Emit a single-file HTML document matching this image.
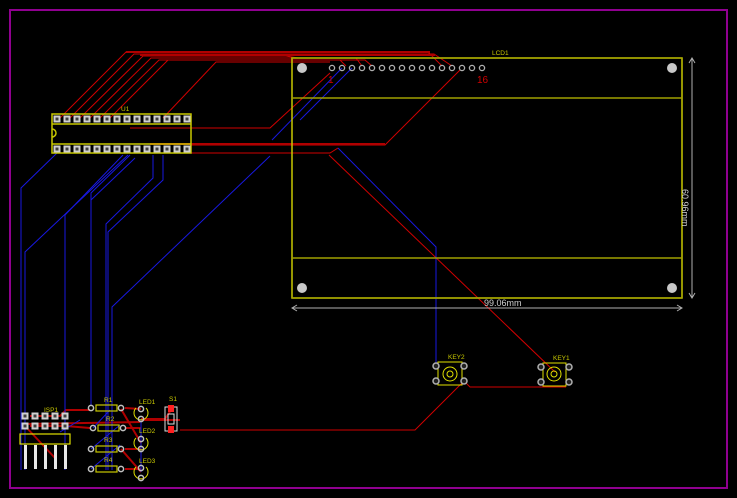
<!DOCTYPE html>
<html><head><meta charset="utf-8"><style>
html,body{margin:0;padding:0;background:#000;}
svg{display:block;}
text{font-family:"Liberation Sans",sans-serif;}
</style></head><body>
<svg width="737" height="498" viewBox="0 0 737 498" xmlns="http://www.w3.org/2000/svg">
<defs>
<g id="sq"><rect x="-3.5" y="-3.5" width="7" height="7" fill="#d0d0d0"/><rect x="-1.5" y="-1.5" width="3" height="3" fill="#404040"/></g>
</defs>
<rect width="737" height="498" fill="#000"/>
<rect x="10" y="10" width="717" height="478" fill="none" stroke="#900090" stroke-width="2"/>

<g fill="none" stroke="#d00000" stroke-width="1">
<polyline points="60,118 126,52 428,52 442,66"/>
<polyline points="70,118 134,54 434,54 452,66"/>
<polyline points="80,118 143,56 286,56 298,58"/>
<polyline points="90,118 151,58 356,58 362,66"/>
<polyline points="100,118 159,60 365,60 372,66"/>
<polyline points="110,118 168,60 340,60 346,66"/>
<polyline points="163,118 216,62 330,62"/>
<polyline points="130,128 270,128 330,73"/>
<polyline points="190,145 385,145 460,70"/>
<polyline points="105,153 330,153 338,148"/>
<polyline points="329,155 555,372"/>
<polyline points="464,381 415,430 180,430"/>
<polyline points="464,381 470,387 566,387"/>
</g>
<g fill="none" stroke="#b00000" stroke-width="2">
<line x1="126" y1="52" x2="430" y2="52"/>
<line x1="140" y1="55" x2="435" y2="55"/>
<line x1="150" y1="144" x2="385" y2="144"/>
<polyline points="30,416 60,416 66,410 90,410"/>
<polyline points="30,426 66,426 90,428"/>
<polyline points="125,408 141,409"/>
<polyline points="125,428 141,428"/>
<polyline points="125,449 141,449"/>
<polyline points="125,469 141,469"/>
<polyline points="141,419 165,419 171,410"/>
<polyline points="141,420 180,420"/>
<polyline points="25,426 55,458"/>
<polyline points="121,409 141,443"/>
<polyline points="121,449 141,472"/>
<polyline points="25,424 140,422"/>
</g>

<g fill="none" stroke="#1818e0" stroke-width="1">
<polyline points="57,153 21,188 21,470"/>
<polyline points="128,155 25,252 25,470"/>
<polyline points="123,155 65,215 65,470"/>
<polyline points="130,155 91,193 91,405"/>
<polyline points="135,158 91,200"/>
<polyline points="153,155 153,178 106,224 106,470"/>
<polyline points="163,155 163,180 108,232 108,470"/>
<polyline points="270,156 112,307 112,470"/>
<polyline points="338,148 436,247 436,365"/>
<polyline points="352,68 300,120"/>
<polyline points="342,68 272,140"/>
<polyline points="141,419 141,472"/>
<polyline points="93,428 110,410"/>
<polyline points="91,449 120,425"/>
<polyline points="91,469 120,445"/>
<polyline points="60,432 80,420"/>
</g>

<g fill="none">
<rect x="292" y="58" width="390" height="240" stroke="#c8c800" stroke-width="1.5"/>
<line x1="292" y1="98" x2="682" y2="98" stroke="#a0a000" stroke-width="1.5"/>
<line x1="292" y1="258" x2="682" y2="258" stroke="#a0a000" stroke-width="1.5"/>
<line x1="292" y1="58" x2="682" y2="58" stroke="#a0a000" stroke-width="1.5"/>
<line x1="292" y1="298" x2="682" y2="298" stroke="#a0a000" stroke-width="1.5"/>
</g>
<g fill="#c8c8c8">
<circle cx="302" cy="68" r="5"/><circle cx="672" cy="68" r="5"/>
<circle cx="302" cy="288" r="5"/><circle cx="672" cy="288" r="5"/>
</g>
<g fill="none" stroke="#b0b0b0" stroke-width="1.3">
<circle cx="332" cy="68" r="2.6"/><circle cx="342" cy="68" r="2.6"/><circle cx="352" cy="68" r="2.6"/><circle cx="362" cy="68" r="2.6"/>
<circle cx="372" cy="68" r="2.6"/><circle cx="382" cy="68" r="2.6"/><circle cx="392" cy="68" r="2.6"/><circle cx="402" cy="68" r="2.6"/>
<circle cx="412" cy="68" r="2.6"/><circle cx="422" cy="68" r="2.6"/><circle cx="432" cy="68" r="2.6"/><circle cx="442" cy="68" r="2.6"/>
<circle cx="452" cy="68" r="2.6"/><circle cx="462" cy="68" r="2.6"/><circle cx="472" cy="68" r="2.6"/><circle cx="482" cy="68" r="2.6"/>
</g>
<text x="328" y="83" fill="#d00000" font-size="10">1</text>
<text x="477" y="83" fill="#d00000" font-size="10">16</text>
<text x="492" y="55" fill="#c8c800" font-size="6.5">LCD1</text>

<g stroke="#b0b0b0" stroke-width="1" fill="none">
<line x1="692" y1="58" x2="692" y2="298"/>
<polyline points="689,63 692,58 695,63"/>
<polyline points="689,293 692,298 695,293"/>
<line x1="292" y1="308" x2="682" y2="308"/>
<polyline points="297,305 292,308 297,311"/>
<polyline points="677,305 682,308 677,311"/>
</g>
<text x="484" y="306" fill="#d0d0d0" font-size="9">99.06mm</text>
<text transform="translate(682,189) rotate(90)" fill="#d0d0d0" font-size="9">60.96mm</text>

<g fill="none" stroke="#c8c800" stroke-width="1.5">
<rect x="52" y="114" width="139" height="39"/>
<line x1="52" y1="124" x2="191" y2="124"/>
<line x1="52" y1="144" x2="191" y2="144"/>
<path d="M52,129 a4,4 0 0 1 0,8" />
</g>
<text x="121" y="111" fill="#c8c800" font-size="6.5">U1</text>
<g>
<use href="#sq" x="57" y="119"/><use href="#sq" x="67" y="119"/><use href="#sq" x="77" y="119"/><use href="#sq" x="87" y="119"/><use href="#sq" x="97" y="119"/><use href="#sq" x="107" y="119"/><use href="#sq" x="117" y="119"/><use href="#sq" x="127" y="119"/><use href="#sq" x="137" y="119"/><use href="#sq" x="147" y="119"/><use href="#sq" x="157" y="119"/><use href="#sq" x="167" y="119"/><use href="#sq" x="177" y="119"/><use href="#sq" x="187" y="119"/>
<use href="#sq" x="57" y="149"/><use href="#sq" x="67" y="149"/><use href="#sq" x="77" y="149"/><use href="#sq" x="87" y="149"/><use href="#sq" x="97" y="149"/><use href="#sq" x="107" y="149"/><use href="#sq" x="117" y="149"/><use href="#sq" x="127" y="149"/><use href="#sq" x="137" y="149"/><use href="#sq" x="147" y="149"/><use href="#sq" x="157" y="149"/><use href="#sq" x="167" y="149"/><use href="#sq" x="177" y="149"/><use href="#sq" x="187" y="149"/>
</g>

<text x="44" y="412" fill="#c8c800" font-size="6.5">ISP1</text>
<g>
<use href="#sq" x="25" y="416"/><use href="#sq" x="35" y="416"/><use href="#sq" x="45" y="416"/><use href="#sq" x="55" y="416"/><use href="#sq" x="65" y="416"/>
<use href="#sq" x="25" y="426"/><use href="#sq" x="35" y="426"/><use href="#sq" x="45" y="426"/><use href="#sq" x="55" y="426"/><use href="#sq" x="65" y="426"/>
</g>
<rect x="20" y="434" width="50" height="10" fill="none" stroke="#e0e000" stroke-width="1.2"/>
<g fill="#e8e8e8">
<rect x="24" y="445" width="3" height="24"/><rect x="34" y="445" width="3" height="24"/><rect x="44" y="445" width="3" height="24"/><rect x="54" y="445" width="3" height="24"/><rect x="64" y="445" width="3" height="24"/>
</g>

<g fill="none" stroke="#c8c800" stroke-width="1.2">
<rect x="96" y="405" width="21" height="6"/>
<rect x="98" y="425" width="21" height="6"/>
<rect x="96" y="446" width="21" height="6"/>
<rect x="96" y="466" width="21" height="6"/>
</g>
<g fill="none" stroke="#c0c0c0" stroke-width="1.5">
<circle cx="91" cy="408" r="2.6"/><circle cx="121" cy="408" r="2.6"/>
<circle cx="93" cy="428" r="2.6"/><circle cx="123" cy="428" r="2.6"/>
<circle cx="91" cy="449" r="2.6"/><circle cx="121" cy="449" r="2.6"/>
<circle cx="91" cy="469" r="2.6"/><circle cx="121" cy="469" r="2.6"/>
</g>
<g fill="#c8c800" font-size="6.5">
<text x="104" y="402">R1</text><text x="106" y="421">R2</text><text x="104" y="442">R3</text><text x="104" y="462">R4</text>
<text x="139" y="404">LED1</text><text x="139" y="433">LED2</text><text x="139" y="463">LED3</text>
<text x="169" y="401">S1</text>
</g>
<g fill="none" stroke="#e0e000" stroke-width="1">
<path d="M136,408 a7,7 0 1 0 10,0"/>
<path d="M136,438 a7,7 0 1 0 10,0"/>
<path d="M136,467 a7,7 0 1 0 10,0"/>
</g>
<g fill="none" stroke="#c0c0c0" stroke-width="1.5">
<circle cx="141" cy="409" r="2.6"/><circle cx="141" cy="419" r="2.6"/>
<circle cx="141" cy="439" r="2.6"/><circle cx="141" cy="449" r="2.6"/>
<circle cx="141" cy="468" r="2.6"/><circle cx="141" cy="478" r="2.6"/>
</g>
<rect x="165" y="407" width="12" height="24" fill="none" stroke="#e0e0e0" stroke-width="1"/>
<rect x="168" y="414" width="6" height="10" fill="none" stroke="#e0e0e0" stroke-width="1"/>
<rect x="168" y="405" width="6" height="7" fill="#ff2020"/>
<rect x="168" y="426" width="6" height="7" fill="#ff2020"/>

<g fill="none" stroke="#e0e000" stroke-width="1">
<rect x="438" y="362" width="24" height="23"/>
<circle cx="450" cy="374" r="7"/><circle cx="450" cy="374" r="3"/>
<rect x="543" y="363" width="23" height="23"/>
<circle cx="554" cy="374" r="7"/><circle cx="554" cy="374" r="3"/>
</g>
<g fill="#202020" stroke="#b0b0b0" stroke-width="1.5">
<circle cx="436" cy="366" r="3"/><circle cx="464" cy="366" r="3"/><circle cx="436" cy="381" r="3"/><circle cx="464" cy="381" r="3"/>
<circle cx="541" cy="367" r="3"/><circle cx="569" cy="367" r="3"/><circle cx="541" cy="382" r="3"/><circle cx="569" cy="382" r="3"/>
</g>
<g fill="#c8c800" font-size="6.5">
<text x="448" y="359">KEY2</text><text x="553" y="360">KEY1</text>
</g>
</svg>
</body></html>
